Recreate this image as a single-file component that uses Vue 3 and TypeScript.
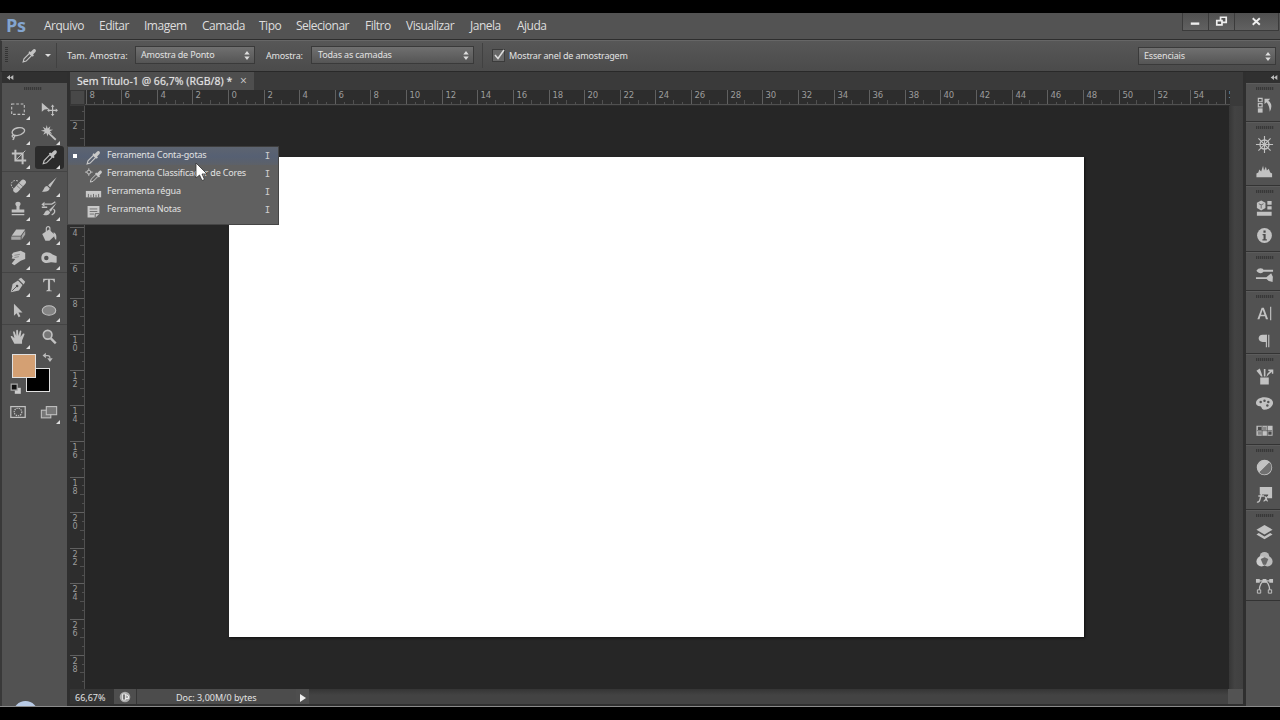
<script setup lang="ts">
interface Tool { icon: string; flyout?: boolean; active?: boolean }
interface Tick { pos: number; size: number; label: string }

const menus = [
  { label: 'Arquivo', width: 55 }, { label: 'Editar', width: 45 }, { label: 'Imagem', width: 58 },
  { label: 'Camada', width: 57 }, { label: 'Tipo', width: 37 }, { label: 'Selecionar', width: 69 },
  { label: 'Filtro', width: 41 }, { label: 'Visualizar', width: 64 }, { label: 'Janela', width: 47 },
  { label: 'Ajuda', width: 40 },
]

const toolGroups: { rows: Tool[][] }[] = [
  { rows: [
    [{ icon: 'marquee', flyout: true }, { icon: 'move' }],
    [{ icon: 'lasso', flyout: true }, { icon: 'wand', flyout: true }],
    [{ icon: 'crop', flyout: true }, { icon: 'dropper', flyout: true, active: true }],
  ] },
  { rows: [
    [{ icon: 'heal', flyout: true }, { icon: 'brush', flyout: true }],
    [{ icon: 'stamp', flyout: true }, { icon: 'history', flyout: true }],
    [{ icon: 'eraser', flyout: true }, { icon: 'bucket', flyout: true }],
    [{ icon: 'smudge', flyout: true }, { icon: 'sponge', flyout: true }],
  ] },
  { rows: [
    [{ icon: 'pen', flyout: true }, { icon: 'type', flyout: true }],
    [{ icon: 'arrow', flyout: true }, { icon: 'ellipse', flyout: true }],
  ] },
  { rows: [[{ icon: 'hand', flyout: true }, { icon: 'zoom' }]] },
]

const panelGroups = [
  { height: 39, icons: ['pHistory'] },
  { height: 64, icons: ['wheel', 'histogram'] },
  { height: 66, icons: ['properties', 'info'] },
  { height: 39, icons: ['brushes'] },
  { height: 63, icons: ['character', 'paragraph'] },
  { height: 91, icons: ['presets', 'palette', 'swatches'] },
  { height: 65, icons: ['adjust', 'styles'] },
  { height: 91, icons: ['layers', 'channels', 'paths'] },
]

const flyout = [
  { label: 'Ferramenta Conta-gotas', icon: 'dropper', selected: true },
  { label: 'Ferramenta Classificador de Cores', icon: 'sampler', selected: false },
  { label: 'Ferramenta régua', icon: 'ruler', selected: false },
  { label: 'Ferramenta Notas', icon: 'note', selected: false },
]

/* Ruler ticks: a labelled line every two units, quarter steps between. */
const STEP = 35.62
function ticks(origin: number, from: number, to: number): Tick[] {
  const out: Tick[] = []
  for (let q = -16; q < 114; q++) {
    const pos = origin + (q * STEP) / 4
    if (pos < from || pos > to) continue
    const major = q % 4 === 0
    out.push({ pos: Math.round(pos) - 0.5, size: major ? 15 : q % 2 === 0 ? 5 : 3, label: major ? String(Math.abs(q / 2)) : '' })
  }
  return out
}
const hTicks = ticks(144, 0, 1144)
const vTicks = ticks(51, 0, 582)

const dropper = '<path d="M2.500 17.500l1-3.600L10 7.400l2.600 2.600-6.500 6.500z" fill="none" stroke="currentColor" stroke-width="1.300"/><path d="M8.700 6.200l1.500-1.300 1.200 1L14 3.200c2-2 4.900.6 3 2.800l-2.800 2.800 1 1.200-1.400 1.400z" fill="currentColor"/>'

const icons: Record<string, string> = {
  dropper,
  marquee: '<rect x="3" y="4.500" width="14" height="11.500" fill="none" stroke="currentColor" stroke-width="1.200" stroke-dasharray="3 2"/>',
  move: '<path d="M2 3v10l3-2.500 5-.5z" fill="currentColor"/><path d="M14 7v9M9.500 11.500h9" stroke="currentColor" stroke-width="1.300"/><path d="M14 5l2 2.500h-4zM14 18l2-2.500h-4zM7.800 11.500l2.500-2v4zM20 11.500l-2.500-2v4z" fill="currentColor"/>',
  lasso: '<path d="M6 12.500C1 10 4 5 10 4.200c6-.9 9.300 2.400 6 5.600-2.500 2.500-7 3.400-10 2.700zm0 0c-2-.8-3.200 1-1.800 2 1.600 1 3-.8 1.800-2zm-1 2.200c1 1.300.2 2-1 2.800" fill="none" stroke="currentColor" stroke-width="1.500"/>',
  wand: '<path d="M8.500 9l9 8.500" stroke="currentColor" stroke-width="2"/><path d="M7.500 1l1 4 3-2.500-1 3.500 4 .5-3.500 1.500 2.500 3-4-1.500-1 4.500-1.500-4-3.500 2 1.800-3.500L1 7.500l4-1L3 3l3.500 2z" fill="currentColor"/>',
  crop: '<path d="M6 2v12h12M2 6h12v12" fill="none" stroke="currentColor" stroke-width="2.200"/><path d="M7 13L17 3" stroke="currentColor"/>',
  heal: '<path d="M5.500 13.500l8-8.500a3 3 0 0 1 4.500 4l-8 8.500a3 3 0 0 1-4.500-4z" fill="currentColor"/><path d="M8.500 10.500l4.500 4M11 7.800l4.500 4" stroke="#666" stroke-width=".8"/><path d="M5 14c-5-4-2-11 5-8.500" fill="none" stroke="currentColor" stroke-dasharray="2 1.300"/>',
  brush: '<path d="M18.500 1.500L9 10.300l2.300 2.400z" fill="currentColor"/><path d="M8 11.200l2.800 2.600c-.8 3.200-4.500 4.200-8.800 3.400 2.800-1 2-5.700 6-6z" fill="currentColor"/>',
  stamp: '<path d="M10 2c3.500 0 3.500 3.200 1.700 5v3.500H17v3.500H3v-3.500h5.300V7C6.500 5.200 6.500 2 10 2zM3 15.500h14V17H3z" fill="currentColor"/>',
  history: '<path d="M18.500 3L10 11l2 2zM9 11.500l2.300 2c-1 3.300-4.300 3.800-8.300 3.300 2.500-1 2-5.300 6-5.300z" fill="currentColor"/><path d="M5 4.500h8c2-1 3-1.500 4-2.500M2 8h6M15 10c2.500 2 1.500 5-2 6.500" fill="none" stroke="currentColor" stroke-width="1.500"/><path d="M1.500 5l3.500-3v5.500z" fill="currentColor"/>',
  eraser: '<path d="M8 5h10l-5 7H3z" fill="currentColor"/><path d="M2.500 12.800H13V16.500H2.500zM14 12.200L18 6.500v4L14 16.300z" fill="currentColor" opacity=".75"/>',
  bucket: '<path d="M2.500 10l7.500-5 7 6.500L10.500 17.500H6z" fill="currentColor"/><path d="M7 9V4c0-3 4-3 4 0v5" fill="none" stroke="currentColor" stroke-width="1.300"/><path d="M15 8c3.500 1 3.500 5 3 8.500-2.300-1-2.300-4.500-3-8.500z" fill="currentColor"/>',
  smudge: '<path d="M5 4l8-2 5 2.500v6.500l-5 2-7 5-3-2 4-5-4-.5 1-2.500-1-2z" fill="currentColor"/><path d="M6 7l6-1M6 9.500l5-1" stroke="#777" stroke-width=".8"/>',
  sponge: '<path d="M1.500 10C1.500 3 9 2 14 6l4.500 2v7c-2 1-4.500-1-7.500 0-5 1.500-9.500 0-9.500-5z" fill="currentColor"/><circle cx="7" cy="10" r="2.500" fill="#505050"/>',
  pen: '<path d="M2 18l2-9 6-4 5 5-4 6z" fill="currentColor"/><path d="M3 17l5.500-5.500" stroke="#505050"/><circle cx="9" cy="11" r="1.400" fill="#505050"/><path d="M10.500 3.500l3-1.500L18 6.500l-1.700 3z" fill="currentColor"/>',
  type: '<path d="M3.500 3h13v4h-1c-.3-2-1-2.700-4.300-2.700V15c0 1 .5 1.200 2 1.300V17H6.800v-.7c1.500-.1 2-.3 2-1.300V4.300C5.500 4.300 4.800 5 4.500 7h-1z" fill="currentColor"/>',
  arrow: '<path d="M5.500 3v13.500l3-3 2.200 4.500 2-1-2.200-4.200h4.500z" fill="currentColor"/>',
  ellipse: '<ellipse cx="10" cy="10.500" rx="7.500" ry="5.300" fill="#858585" stroke="currentColor" stroke-width="1.200"/>',
  hand: '<path d="M6 17.500L2 10c-.4-1.300 1-1.600 1.700-.8L6 11.500 4.500 4.800c0-1.400 1.500-1.500 1.900-.2L8 9V3c.2-1.500 1.900-1.500 2 0l.4 6 1.500-5.500c.5-1.300 2-1 1.800.4L12.800 10l2.600-3.500c1-1 2.100-.2 1.700.9L14.500 14v3.500z" fill="currentColor"/>',
  zoom: '<circle cx="8.500" cy="7.500" r="4.800" fill="#777" stroke="currentColor" stroke-width="1.800"/><path d="M12 11.500l5.500 5.500" stroke="currentColor" stroke-width="2.600"/>',
  swap: '<path d="M6 6.500h4.500c3 0 4 1.500 4 5" fill="none" stroke="currentColor" stroke-width="2"/><path d="M1 6.500L7 1.500v10zM14.500 18l-5-6.500h10z" fill="currentColor"/>',
  quick: '<rect x="2" y="4" width="16" height="12" fill="none" stroke="currentColor" stroke-width="1.400"/><circle cx="10" cy="10" r="4.200" fill="none" stroke="currentColor" stroke-width="1.300" stroke-dasharray="1.500 1"/>',
  screen: '<rect x="1.500" y="8" width="10.500" height="8.500" fill="#777" stroke="currentColor" stroke-width="1.200"/><rect x="7" y="4" width="11.500" height="9" fill="#777" stroke="currentColor" stroke-width="1.200"/>',
  sampler: '<g transform="translate(4 2) scale(.9)">' + dropper + '</g><circle cx="4.500" cy="6" r="2.300" fill="none" stroke="currentColor"/><path d="M4.500 1.500v3M4.500 7.500v3M0 6h3M6 6h3" stroke="currentColor"/>',
  ruler: '<path d="M1 7h18v7.500H1z" fill="currentColor"/><path d="M4 10.500v4M7 11.500v3M10 10.500v4M13 11.500v3M16 10.500v4" stroke="#606060"/>',
  note: '<path d="M3 3.500h14v9L12.500 17H3z" fill="currentColor"/><path d="M5.500 7h9M5.500 10h9M5.500 13h5" stroke="#666"/><path d="M12 17v-4.500h5" fill="none" stroke="#555"/>',
  pHistory: '<path d="M3.500 2.500h4v3.500h-4zM3.500 8h4v3.500h-4z" fill="none" stroke="currentColor" stroke-width="1.200"/><path d="M3 13h5v4.500H3z" fill="currentColor"/><path d="M10 8.500V3h6l-2 2c4 2.500 4 7 1.500 11.500-.2-4-.8-7-3.200-10z" fill="currentColor"/>',
  wheel: '<circle cx="10" cy="10" r="4.700" fill="none" stroke="currentColor" stroke-width="1.500"/><path d="M10 1v18M1 10h18M3.600 3.600l12.800 12.800M16.400 3.600L3.600 16.400" stroke="currentColor" stroke-width="1.200"/>',
  histogram: '<path d="M1.500 16v-4l2-1 1-3 2 2 2-6 1 5 2-4 1 4 2-2 1.500 4 2 1v4z" fill="currentColor"/>',
  properties: '<path d="M2 4l4.500-2.500L11 4v5.500l-4.500 2.500L2 9.500z" fill="currentColor"/><path d="M4 5l2.500 1.200L9 5M6.500 6.500V10" fill="none" stroke="#666"/><path d="M13 2h4.500v4H13zM13 7.500h4.500V11H13zM2 13.500h15.500v4H2z" fill="currentColor"/>',
  info: '<circle cx="10" cy="10" r="7.800" fill="currentColor"/><path d="M8 8.500h3.200v5.500h1.300v1.200H7.800V14H9V9.700H8zM8.900 4.800h2.300V7H8.900z" fill="#4d4d4d"/>',
  brushes: '<path d="M8 5h11v2H8zM1.500 6c2-3.500 7-3.500 8 0-1 3.500-6 3.500-8 0zM1 12.800h11v2H1zM11 13.800l6-5 1.800 3.500-.3 5.500-4-1z" fill="currentColor"/>',
  character: '<path d="M2.500 16L7 4h2.300l4.500 12h-2.300l-1-3H5.700l-1 3zM6.300 11.300h3.600L8.100 6z" fill="currentColor"/><path d="M16.500 3v14" stroke="currentColor" stroke-width="1.200"/>',
  paragraph: '<path d="M14.500 4v13M12 4v13" stroke="currentColor" stroke-width="1.200"/><path d="M15 4H8C2.500 4 2.500 11.500 8 11.500h4V4z" fill="currentColor"/>',
  presets: '<path d="M5.500 11h9v7.500h-9zM9.300 2h1.700v8H9.300zM1.500 4l3.500-2.500 1.500 4L8 10H6.500zM13 7l4-4 1.500 1.500L14.500 8 12 10.500z" fill="currentColor"/><path d="M14 3.500h4.500V7" fill="none" stroke="currentColor" stroke-width="1.500"/>',
  palette: '<path d="M10 3.500c5 0 9 2.500 9 6S14.500 16.500 9.500 16.500c-3 0-2-3-4-3.500-3 0-4.500-1.500-4.500-3.500 0-3.500 4-6 9-6z" fill="currentColor"/><g fill="#555"><circle cx="6" cy="8.500" r="1.300"/><circle cx="10" cy="7" r="1.300"/><circle cx="14" cy="8.500" r="1.300"/><circle cx="13" cy="12" r="1.300"/></g>',
  swatches: '<path d="M1.500 5h17v10.500h-17z" fill="currentColor"/><path d="M3 6h4v3.500H3zM14 11h3.500v3.500H14z" fill="#4a4a4a"/><path d="M8.500 6h3.500v3.500H8.500zM3 11h4v3.500H3z" fill="#858585"/><path d="M7.500 5v10.500M13 5v10.500M2 10.200h16" stroke="#555" stroke-width=".8"/>',
  adjust: '<circle cx="10" cy="10" r="7.500" fill="none" stroke="currentColor" stroke-width="1.300"/><path d="M15.300 4.700L4.700 15.300A7.500 7.500 0 0 1 15.300 4.700z" fill="currentColor"/><path d="M15.300 4.700L4.700 15.300A7.500 7.500 0 0 0 15.300 4.700z" fill="#707070"/>',
  styles: '<path d="M5 2h13v12h-5l1-4H5z" fill="currentColor"/><path d="M2 18c3 .5 3-2 4.500-7.500C7 8 8.500 7.500 10 8M3.500 11.500h6M10 12c2 0 1.500 5 3.500 5M14 12c-2 0-3 5-5 5" fill="none" stroke="currentColor" stroke-width="1.500"/>',
  layers: '<path d="M10 2l8.500 5-8.500 5-8.500-5z" fill="currentColor"/><path d="M1.500 12l2.500-1.500 6 3.700 6-3.700 2.500 1.500-8.500 5z" fill="currentColor"/>',
  channels: '<circle cx="10" cy="7" r="5" fill="#b8b8b8"/><circle cx="6.800" cy="12" r="5.300" fill="#ccc"/><circle cx="13.200" cy="12" r="5.300" fill="#bbb"/><path d="M10 7.500L14 9.500l-2.500 6h-3L6 9.500z" fill="#686868"/>',
  paths: '<path d="M4 4h12M4.500 15c0-14 11-14 11 0" fill="none" stroke="currentColor" stroke-width="1.400"/><path d="M1 2h4v4H1zM15 2h4v4h-4zM8 2h4v4H8z" fill="currentColor"/><path d="M2.500 13.500h3.500v3.500H2.500zM14 13.500h3.500v3.500H14z" fill="#555" stroke="currentColor"/>',
}
</script>

<template>
  <div class="screen">
    <header class="menubar">
      <span class="logo">Ps</span>
      <nav class="menus">
        <span v-for="m in menus" :key="m.label" :style="{ width: m.width + 'px' }">{{ m.label }}</span>
      </nav>
      <div class="winbtns">
        <span class="wb"><svg viewBox="0 0 26 18"><path d="M8 10h9v2.500H8z" fill="#eee" /></svg></span>
        <span class="wb"><svg viewBox="0 0 26 18"><path d="M12 4.500h6v5.500h-6z" fill="none" stroke="#eee" stroke-width="1.800" /><path d="M8 8h5.500v4.500H8z" fill="#555" stroke="#eee" stroke-width="1.800" /></svg></span>
        <span class="wb close"><svg viewBox="0 0 44 18"><path d="M18 5.500l7.500 7M25.500 5.500l-7.500 7" stroke="#eee" stroke-width="2" /></svg></span>
      </div>
    </header>

    <section class="options">
      <i class="vgrip"></i>
      <svg class="opt-icon" viewBox="0 0 20 20" v-html="icons.dropper"></svg>
      <i class="caret"></i>
      <i class="sep"></i>
      <span class="t l1">Tam. Amostra:</span>
      <div class="select s1"><span>Amostra de Ponto</span><svg viewBox="0 0 6 10"><path d="M0 4l3-4 3 4zM0 6l3 4 3-4z" fill="#ddd" /></svg></div>
      <span class="t l2">Amostra:</span>
      <div class="select s2"><span>Todas as camadas</span><svg viewBox="0 0 6 10"><path d="M0 4l3-4 3 4zM0 6l3 4 3-4z" fill="#ddd" /></svg></div>
      <i class="sep second"></i>
      <svg class="check" viewBox="0 0 14 14"><rect x=".5" y="1.500" width="12" height="12" fill="#686868" stroke="#3b3b3b" /><path d="M3 7l3 3.500L12 2" fill="none" stroke="#ddd" stroke-width="1.500" /></svg>
      <span class="t l3">Mostrar anel de amostragem</span>
      <div class="select s3"><span>Essenciais</span><svg viewBox="0 0 6 10"><path d="M0 4l3-4 3 4zM0 6l3 4 3-4z" fill="#ddd" /></svg></div>
    </section>

    <main class="work">
      <aside class="tools">
        <div class="dock-head"><svg viewBox="0 0 8 6"><path d="M4 0v6L0 3zM8 0v6L4 3z" fill="#bbb" /></svg></div>
        <div class="grip-row"><i class="grip"></i></div>
        <div v-for="(g, gi) in toolGroups" :key="gi" class="tool-group">
          <div v-for="(row, ri) in g.rows" :key="ri" class="tool-row">
            <div v-for="t in row" :key="t.icon" class="tool" :class="{ active: t.active, flyout: t.flyout }">
              <svg viewBox="0 0 20 20" v-html="icons[t.icon]"></svg>
            </div>
          </div>
        </div>
        <div class="colors">
          <div class="bg"></div>
          <div class="fg"></div>
          <svg class="swap" viewBox="0 0 20 20" v-html="icons.swap"></svg>
          <svg class="default" viewBox="0 0 10 10"><path d="M4 4h5v5H4z" fill="#ccc" /><path d="M1 1h5v5H1z" fill="#111" stroke="#aaa" /></svg>
        </div>
        <div class="tool-row modes">
          <div class="tool"><svg viewBox="0 0 20 20" v-html="icons.quick"></svg></div>
          <div class="tool flyout"><svg viewBox="0 0 20 20" v-html="icons.screen"></svg></div>
        </div>
        <div class="orb"></div>
      </aside>

      <section class="document">
        <div class="tabs"><div class="tab"><span>Sem Título-1 @ 66,7% (RGB/8) *</span><b>×</b></div></div>
        <div class="top-ruler">
          <div class="corner"></div>
          <svg class="hr" width="1145" height="16">
            <g v-for="t in hTicks" :key="t.pos">
              <line :x1="t.pos" :x2="t.pos" :y1="15 - t.size" y2="15" :class="t.label ? 'major' : 'minor'" />
              <text v-if="t.label" :x="t.pos + 3" y="8">{{ t.label }}</text>
            </g>
            <line x1="0" x2="1145" y1="14.500" y2="14.500" class="edge" />
          </svg>
        </div>
        <div class="middle">
          <svg class="vr" width="15" height="583">
            <g v-for="t in vTicks" :key="t.pos">
              <line :y1="t.pos" :y2="t.pos" :x1="15 - t.size" x2="15" :class="t.label ? 'major' : 'minor'" />
              <text v-for="(d, i) in t.label" :key="i" x="5" text-anchor="middle" :y="t.pos + 8.500 + i * 7.500">{{ d }}</text>
            </g>
            <line x1="14.500" x2="14.500" y1="0" y2="583" class="edge" />
          </svg>
          <div class="pasteboard"><div class="canvas"></div></div>
          <div class="vscroll"></div>
        </div>
        <footer class="status">
          <span class="zoom">66,67%</span>
          <span class="stat-icon"><svg viewBox="0 0 12 12"><circle cx="6" cy="6" r="5.300" fill="#aaa" /><path d="M3.500 3h3v6h-3z" fill="#777" stroke="#ddd" /><path d="M6.500 3.500l3 1.500v2.500H6.500" fill="none" stroke="#eee" /></svg></span>
          <span class="docinfo">Doc: 3,00M/0 bytes</span>
          <span class="more"><svg viewBox="0 0 6 8"><path d="M0 0l6 4-6 4z" fill="#eee" /></svg></span>
          <span class="hscroll"></span>
          <span class="scroll-corner"></span>
        </footer>
      </section>

      <aside class="panels">
        <div class="dock-head"><svg viewBox="0 0 8 6"><path d="M4 0v6L0 3zM8 0v6L4 3z" fill="#bbb" /></svg></div>
        <div v-for="(g, i) in panelGroups" :key="i" class="panel-group" :style="{ height: g.height + 'px' }">
          <i class="grip"></i>
          <svg v-for="ic in g.icons" :key="ic" viewBox="0 0 20 20" v-html="icons[ic]"></svg>
        </div>
      </aside>
    </main>

    <div class="flymenu">
      <div v-for="f in flyout" :key="f.label" class="fly-item" :class="{ selected: f.selected }">
        <i></i>
        <svg viewBox="0 0 20 20" v-html="icons[f.icon]"></svg>
        <span>{{ f.label }}</span>
        <kbd>I</kbd>
      </div>
    </div>
    <svg class="cursor" viewBox="0 0 13 20"><path d="M1 1v15l3.500-3 2.500 5.500 2.500-1L7 12h5z" fill="#fff" stroke="#333" stroke-width=".8" /></svg>
  </div>
</template>

<style>
html, body { margin: 0; background: #000; overflow: hidden; }
</style>

<style scoped>
* { box-sizing: border-box; }
.screen { position: relative; width: 1280px; height: 720px; padding-top: 13px; background: #000; color: #e2e2e2; font-family: "Noto Sans", "Open Sans", sans-serif; font-size: 9px; letter-spacing: -.17px; overflow: hidden; white-space: nowrap; }
svg { display: block; flex: none; }
i { display: block; flex: none; }

.menubar { height: 27px; display: flex; background: #535353; border-bottom: 1px solid #2e2e2e; }
.logo { width: 44px; padding-left: 6px; font: bold 18px/25px "Open Sans", sans-serif; letter-spacing: -.4px; color: #83a5d0; }
.menus { display: flex; font: 12px/26px "Open Sans", sans-serif; letter-spacing: -.5px; color: #dedede; }
.winbtns { margin-left: auto; display: flex; height: 18px; margin-right: 1px; }
.wb { width: 26px; background: linear-gradient(#505050, #616161); border: 1px solid #3b3b3b; border-top: 0; border-right: 0; }
.wb svg { width: 100%; height: 17px; }
.close { width: 45px; border-right: 1px solid #3b3b3b; }

.options { height: 32px; display: flex; align-items: center; padding-bottom: 2px; background: linear-gradient(#575757, #4b4b4b); border-top: 1px solid #666; border-bottom: 1px solid #292929; border-left: 2px solid #383838; }
.vgrip { width: 3px; height: 16px; margin-left: 3px; background: repeating-linear-gradient(#343434 0 1px, transparent 1px 2px); }
.opt-icon { width: 17px; height: 17px; margin-left: 13px; color: #c4c4c4; }
.caret { margin-left: 7px; border: 3px solid transparent; border-top-color: #ddd; border-bottom: 0; }
.sep { width: 1px; height: 25px; margin-left: 5px; background: #414141; }
.t { flex: none; }
.l1 { width: 68px; margin-left: 10px; letter-spacing: 0; }
.l2 { width: 45px; margin-left: 11px; }
.select { height: 18px; display: flex; align-items: center; justify-content: space-between; flex: none; padding: 0 4px 0 5px; background: linear-gradient(#707070, #555); border: 1px solid #3a3a3a; line-height: 14px; }
.select svg { width: 6px; height: 9px; }
.s1 { width: 120px; }
.s2 { width: 163px; padding-left: 6px; }
.s3 { width: 138px; margin-left: auto; margin-right: 4px; position: relative; top: 1px; }
.second { margin-left: 8px; }
.check { width: 14px; height: 14px; margin: 0 3px 1px 9px; }

.work { height: 635px; display: flex; background: #2f2f2f; border-bottom: 1px solid #8b8b8b; }
.dock-head { height: 11px; padding: 3px 4px; background: #303030; }
.dock-head svg { width: 8px; height: 5px; }
.tools { width: 67px; background: #525252; border-left: 2px solid #393939; position: relative; flex: none; overflow: hidden; }
.grip-row { height: 13px; padding: 4px 4px 0 0; display: flex; justify-content: center; }
.grip { width: 18px; height: 3px; background: repeating-linear-gradient(90deg, #383838 0 1px, #4a4a4a 1px 2px); }
.tool-group { padding: 0 3px 2px 1px; border-bottom: 1px solid #444; }
.tool-row { display: flex; height: 24.400px; padding-top: 1px; }
.tool { position: relative; width: 31px; display: flex; align-items: center; justify-content: center; color: #c1c1c1; }
.tool svg { width: 18px; height: 18px; }
.tool.active { background: #2b2b2b; border-radius: 3px; width: 29px; height: 23px; margin-left: 1px; }
.tool.flyout::after { content: ""; position: absolute; right: 4px; bottom: 0; border: 2px solid transparent; border-right-color: #ddd; border-bottom-color: #ddd; }
.colors { position: relative; height: 48px; }
.modes { padding-top: 0; margin-left: 0; }
.tool-group:nth-of-type(6) { border: 0; padding-bottom: 3px; }
.fg, .bg { position: absolute; width: 24px; height: 24px; border: 1px solid #e0e0e0; }
.fg { left: 10px; top: 2px; background: #d4a073; }
.bg { left: 24px; top: 16px; background: #000; }
.swap { position: absolute; left: 40px; top: 0; width: 11px; height: 11px; color: #bbb; }
.default { position: absolute; left: 8px; top: 31px; width: 12px; height: 12px; }
.orb { position: absolute; left: 11px; bottom: -20px; width: 25px; height: 25px; border-radius: 50%; background: #b9cbe6; }

.document { width: 1173px; margin-left: 3px; display: flex; flex-direction: column; flex: none; }
.tabs { height: 18px; background: #3a3a3a; }
.tab { width: 184px; height: 18px; display: flex; align-items: center; padding-left: 7px; background: #4e4e4e; font-size: 10.500px; letter-spacing: .03px; }
.tab span { width: 163px; text-shadow: 0 0 1px #999; }
.tab b { font: 12px/16px "Open Sans", sans-serif; color: #ccc; }
.top-ruler { height: 16px; display: flex; background: #3a3a3a; }
.corner { width: 15px; height: 15px; background: #484848; border: 1px solid #373737; }
.hr { background: #2d2d2d; }
.major { stroke: #606060; }
.minor { stroke: #505050; }
.edge { stroke: #505050; }
text { font: 8.500px "DejaVu Sans", sans-serif; letter-spacing: -.1px; fill: #9c9c9c; }
.vr text { font-size: 8px; }
.middle { height: 583px; display: flex; }
.vr { background: #2d2d2d; }
.pasteboard { width: 1144px; background: #262626; padding: 51px 0 0 144px; }
.canvas { width: 855px; height: 480px; background: #fff; box-shadow: 1px 1px 2px #111; }
.vscroll { width: 14px; background: linear-gradient(90deg, #363636, #434343 40%, #404040); }
.status { display: flex; height: 16px; background: #404040; border-bottom: 1px solid #2f2f2f; line-height: 17px; letter-spacing: 0; }
.zoom { width: 44px; padding-left: 5px; background: #353535; }
.stat-icon { width: 22px; display: flex; align-items: center; justify-content: center; background: #4e4e4e; }
.stat-icon svg { width: 12px; height: 12px; }
.docinfo { width: 160px; padding-left: 39px; background: #4c4c4c; border-left: 1px solid #363636; }
.more { width: 13px; padding: 5px 0 0 4px; background: #4e4e4e; }
.more svg { width: 6px; height: 8px; }
.hscroll { flex: 1; background: linear-gradient(#353535, #434343 40%); }
.scroll-corner { width: 15px; background: #535353; }

.panels { width: 34px; margin-left: 3px; background: #525252; flex: none; }
.panels .dock-head { padding-left: 24px; }
.panel-group { display: flex; flex-direction: column; align-items: center; border-bottom: 1px solid #333; border-top: 1px solid #5c5c5c; padding: 3px 0 0 3px; color: #c2c2c2; }
.panel-group .grip { margin-bottom: 6px; }
.panel-group svg { width: 19px; height: 19px; margin: 0 0 7.800px; }

.flymenu { position: absolute; left: 67px; top: 146px; width: 212px; height: 79px; background: #606060; border: 1px solid #454545; border-top-color: #3d3d3d; }
.fly-item { height: 18px; display: flex; align-items: center; padding: 0 8px 0 5px; line-height: 14px; }
.fly-item.selected { background: linear-gradient(#5d6470, #566073 55%, #5d6168); }
.fly-item i { width: 4px; height: 4px; margin-right: 8px; }
.fly-item.selected i { background: #fff; }
.fly-item svg { width: 17px; height: 17px; margin: 3px 5px 0 0; color: #c8c8c8; }
.fly-item span { flex: 1; margin-bottom: 2px; }
.fly-item kbd { font: 9px "DejaVu Sans Mono", monospace; color: #d0d0d0; margin-bottom: 1px; }
.cursor { position: absolute; left: 195px; top: 162px; width: 13px; height: 20px; }
</style>
